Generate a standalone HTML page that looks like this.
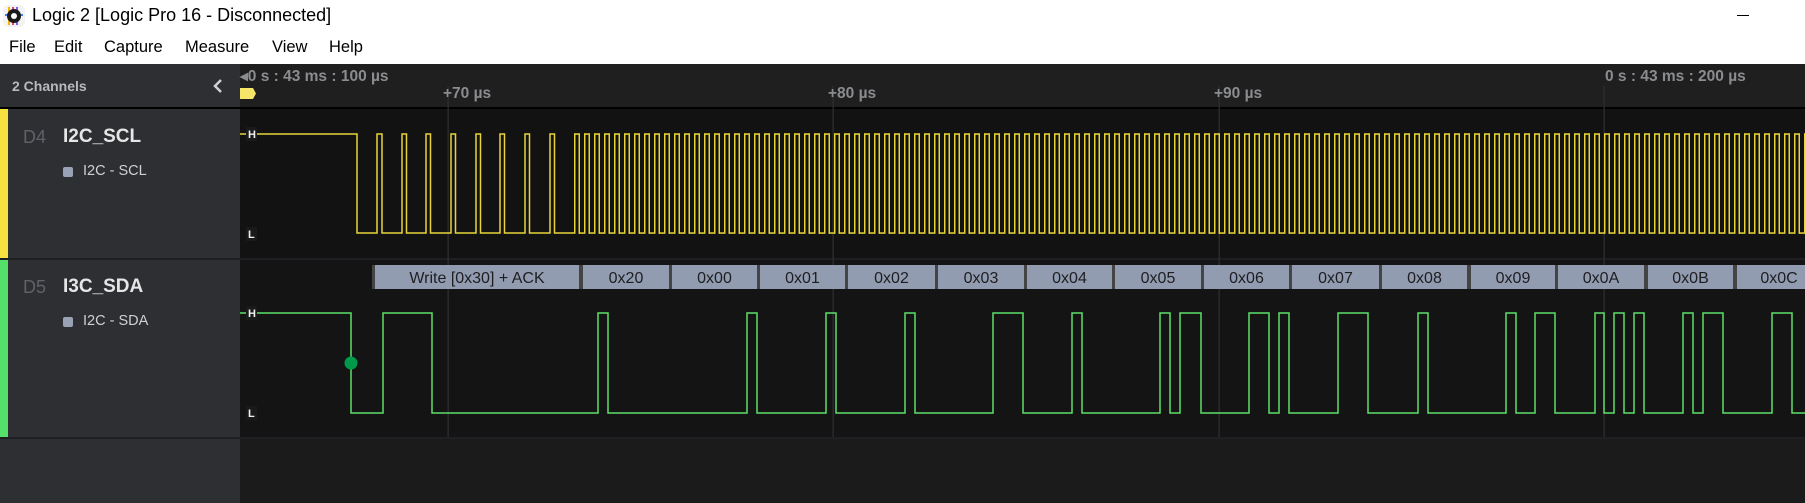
<!DOCTYPE html>
<html><head><meta charset="utf-8"><style>
*{margin:0;padding:0;box-sizing:border-box}
body{width:1805px;height:503px;overflow:hidden;background:#fff;font-family:"Liberation Sans",sans-serif;position:relative}
.a{position:absolute;white-space:nowrap}
</style></head><body>
<!-- title bar -->
<svg class="a" style="left:3px;top:5px" width="22" height="22" viewBox="0 0 22 22">
<rect x="0" y="0" width="22" height="22" rx="5" fill="#f3f3f3"/>
<rect x="5" y="2" width="2" height="18" fill="#f5b400"/><rect x="9" y="2" width="2" height="18" fill="#e0457b"/><rect x="13" y="2" width="2" height="18" fill="#8a5cf6"/>
<rect x="2" y="9" width="18" height="2" fill="#3b82f6"/>
<circle cx="11" cy="11" r="7" fill="#1a1a1a"/><circle cx="11" cy="11" r="3" fill="#fff"/>
</svg>
<div class="a" style="left:32px;top:5px;font-size:18px;color:#000">Logic 2 [Logic Pro 16 - Disconnected]</div>
<div class="a" style="left:1737px;top:15px;width:12px;height:1px;background:#000"></div>
<div class="a" style="left:9px;top:38px;font-size:16.5px;color:#000">File</div>
<div class="a" style="left:54px;top:38px;font-size:16.5px;color:#000">Edit</div>
<div class="a" style="left:104px;top:38px;font-size:16.5px;color:#000">Capture</div>
<div class="a" style="left:185px;top:38px;font-size:16.5px;color:#000">Measure</div>
<div class="a" style="left:272px;top:38px;font-size:16.5px;color:#000">View</div>
<div class="a" style="left:329px;top:38px;font-size:16.5px;color:#000">Help</div>

<!-- left panel -->
<div class="a" style="left:0;top:64px;width:240px;height:439px;background:#2e2f33"></div>
<div class="a" style="left:0;top:107px;width:1805px;height:2px;background:#000"></div>
<div class="a" style="left:12px;top:78px;font-size:14px;font-weight:bold;color:#b8b9bc">2 Channels</div>
<svg class="a" style="left:211px;top:78px" width="14" height="16"><path d="M10 2 L4 8 L10 14" stroke="#d0d0d0" stroke-width="2.5" fill="none"/></svg>
<div class="a" style="left:0;top:109px;width:8px;height:149px;background:#f5e13f"></div>
<div class="a" style="left:0;top:258px;width:1805px;height:2px;background:#1e1f22"></div>
<div class="a" style="left:0;top:260px;width:8px;height:178px;background:#55e06a"></div>
<div class="a" style="left:0;top:437px;width:1805px;height:2px;background:#1e1f22"></div>
<div class="a" style="left:23px;top:127px;font-size:18px;color:#606166">D4</div>
<div class="a" style="left:63px;top:126px;font-size:19px;font-weight:bold;color:#e6e6e6">I2C_SCL</div>
<div class="a" style="left:63px;top:167px;width:10px;height:10px;border-radius:2px;background:#9aa3b6"></div>
<div class="a" style="left:83px;top:163px;font-size:14.5px;color:#cfd0d3">I2C - SCL</div>
<div class="a" style="left:23px;top:277px;font-size:18px;color:#606166">D5</div>
<div class="a" style="left:63px;top:276px;font-size:19px;font-weight:bold;color:#e6e6e6">I3C_SDA</div>
<div class="a" style="left:63px;top:317px;width:10px;height:10px;border-radius:2px;background:#9aa3b6"></div>
<div class="a" style="left:83px;top:313px;font-size:14.5px;color:#cfd0d3">I2C - SDA</div>

<!-- right area -->
<svg class="a" style="left:0;top:0" width="1805" height="503" viewBox="0 0 1805 503">
<defs>
<pattern id="clk" patternUnits="userSpaceOnUse" x="574" y="0" width="10" height="503">
<rect x="0" y="133.3" width="5.7" height="1.5" fill="#e8d43a"/>
<rect x="0" y="133.3" width="1.5" height="100.5" fill="#e8d43a"/>
<rect x="4.5" y="133.3" width="1.5" height="100.5" fill="#e8d43a"/>
<rect x="4.5" y="232.3" width="5.5" height="1.5" fill="#e8d43a"/>
</pattern>
</defs>
<rect x="240" y="64" width="1565" height="43" fill="#1f1f1f"/>
<rect x="240" y="109" width="1565" height="149" fill="#121212"/>
<rect x="240" y="260" width="1565" height="177" fill="#141414"/>
<rect x="240" y="439" width="1565" height="64" fill="#1b1b1b"/>
<g fill="#2e2e2e">
<rect x="447.5" y="86" width="1.3" height="351"/><rect x="832.5" y="86" width="1.3" height="351"/>
<rect x="1218.5" y="86" width="1.3" height="351"/><rect x="1603.5" y="86" width="1.3" height="351"/>
</g>
<g font-family="Liberation Sans, sans-serif" font-weight="bold" font-size="15.5" fill="#8b8c90">
<text x="240" y="81">◂0 s : 43 ms : 100 µs</text>
<text x="443" y="98">+70 µs</text><text x="828" y="98">+80 µs</text><text x="1214" y="98">+90 µs</text>
<text x="1605" y="81">0 s : 43 ms : 200 µs</text>
</g>
<path d="M240 88 H253 L256 93.5 L253 99 H240 Z" fill="#f5e66a"/>
<!-- SCL -->
<path d="M240 134 H357 V233 H377 V134 H382 V233 H402 V134 H406.5 V233 H426 V134 H430.5 V233 H451 V134 H455.5 V233 H476 V134 H480.5 V233 H500 V134 H504.5 V233 H525 V134 H529.5 V233 H550 V134 H554.5 V233 H574" stroke="#e8d43a" stroke-width="1.5" fill="none"/>
<rect x="574" y="130" width="1231" height="106" fill="url(#clk)"/>
<!-- boxes -->
<g fill="#929cb0">
<rect x="375" y="265" width="204" height="24"/><rect x="583" y="265" width="86" height="24"/>
<rect x="672" y="265" width="85" height="24"/><rect x="760" y="265" width="85" height="24"/>
<rect x="848" y="265" width="87" height="24"/><rect x="938" y="265" width="86" height="24"/>
<rect x="1027" y="265" width="85" height="24"/><rect x="1115" y="265" width="86" height="24"/>
<rect x="1204" y="265" width="85" height="24"/><rect x="1292" y="265" width="87" height="24"/>
<rect x="1382" y="265" width="85" height="24"/><rect x="1471" y="265" width="84" height="24"/>
<rect x="1558" y="265" width="86" height="24"/><rect x="1648" y="265" width="85" height="24"/>
<rect x="1737" y="265" width="70" height="24"/>
</g>
<g fill="#444"><rect x="372" y="265" width="3" height="24"/><rect x="579" y="265" width="4" height="24"/><rect x="669" y="265" width="3" height="24"/><rect x="757" y="265" width="3" height="24"/><rect x="845" y="265" width="3" height="24"/><rect x="935" y="265" width="3" height="24"/><rect x="1024" y="265" width="3" height="24"/><rect x="1112" y="265" width="3" height="24"/><rect x="1201" y="265" width="3" height="24"/><rect x="1289" y="265" width="3" height="24"/><rect x="1379" y="265" width="3" height="24"/><rect x="1467" y="265" width="4" height="24"/><rect x="1555" y="265" width="3" height="24"/><rect x="1644" y="265" width="4" height="24"/><rect x="1733" y="265" width="4" height="24"/></g>
<g font-family="Liberation Sans, sans-serif" font-size="16" fill="#1e1e22" text-anchor="middle">
<text x="477" y="283">Write [0x30] + ACK</text><text x="626" y="283">0x20</text>
<text x="714.5" y="283">0x00</text><text x="802.5" y="283">0x01</text><text x="891.5" y="283">0x02</text>
<text x="981" y="283">0x03</text><text x="1069.5" y="283">0x04</text><text x="1158" y="283">0x05</text>
<text x="1246.5" y="283">0x06</text><text x="1335.5" y="283">0x07</text><text x="1424.5" y="283">0x08</text>
<text x="1513" y="283">0x09</text><text x="1601" y="283">0x0A</text><text x="1690.5" y="283">0x0B</text>
<text x="1779" y="283">0x0C</text>
</g>
<!-- SDA -->
<path d="M240 313 H351 V413 H383 V313 H432 V413 H598 V313 H608 V413 H747 V313 H757 V413 H826 V313 H836 V413 H905 V313 H915 V413 H993 V313 H1023 V413 H1072 V313 H1082 V413 H1160 V313 H1170 V413 H1180 V313 H1201 V413 H1249 V313 H1269 V413 H1279 V313 H1289 V413 H1338 V313 H1368 V413 H1418 V313 H1428 V413 H1506 V313 H1516 V413 H1535 V313 H1555 V413 H1595 V313 H1604 V413 H1614 V313 H1624 V413 H1634 V313 H1644 V413 H1683 V313 H1693 V413 H1703 V313 H1723 V413 H1772 V313 H1792 V413 H1805" stroke="#5ce06a" stroke-width="1.5" fill="none"/>
<circle cx="351" cy="363" r="6.5" fill="#00994c"/>
<!-- H/L labels -->
<g fill="#1a1a1a"><rect x="246" y="127" width="11" height="14"/><rect x="246" y="227" width="11" height="14"/><rect x="246" y="306" width="11" height="14"/><rect x="246" y="406" width="11" height="14"/></g>
<g font-family="Liberation Sans, sans-serif" font-weight="bold" font-size="11" fill="#f0f0f0">
<text x="248" y="138">H</text><text x="248" y="238">L</text><text x="248" y="317">H</text><text x="248" y="417">L</text>
</g>
</svg>
</body></html>
